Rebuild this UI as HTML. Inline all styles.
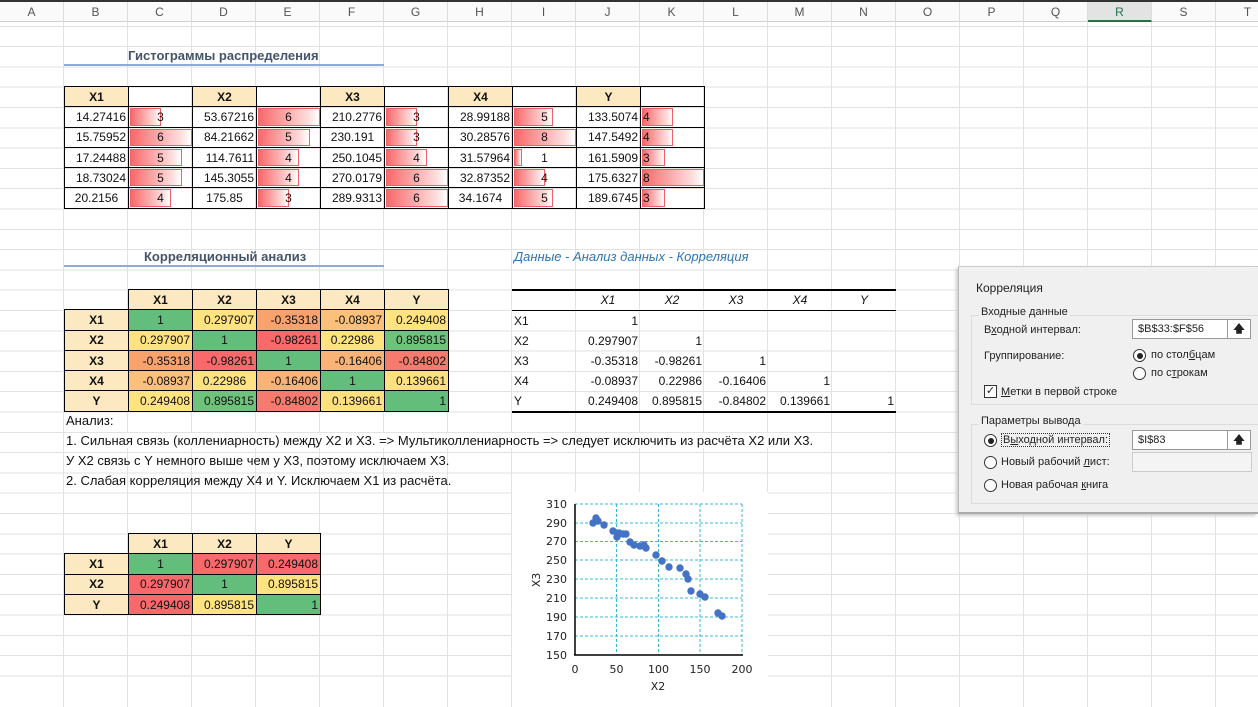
<!DOCTYPE html>
<html><head><meta charset="utf-8"><style>
*{box-sizing:border-box;margin:0;padding:0}
body{width:1258px;height:707px;overflow:hidden;background:#fff;position:relative;font-family:"Liberation Sans Narrow","Liberation Sans","DejaVu Sans Condensed",sans-serif;font-size:13px;color:#111}
.grid{position:absolute;left:0;top:22px;width:1258px;height:685px;
background-image:repeating-linear-gradient(to right,transparent 0 63px,#e2e2e2 63px 64px),repeating-linear-gradient(to bottom,transparent 0 19.3px,#e2e2e2 19.3px 20.3px);background-position:0 -15.5px}
.hdr{position:absolute;left:0;top:0;width:1258px;height:22px;background:#fafafa;border-top:2px solid #333;border-bottom:1px solid #d0d0d0}
.hdr div{position:absolute;top:0;width:64px;height:20px;line-height:20px;text-align:center;color:#555;font-family:"Liberation Sans",sans-serif;font-size:12px;border-right:1px solid #ddd}
.abs{position:absolute}
table{border-collapse:collapse;table-layout:fixed;position:absolute;font-size:12px}
td{height:20.3px;padding:0 2px;white-space:nowrap;overflow:hidden;text-align:right;line-height:18px}
.b td{border:1px solid #000}
.h{background:#fde9c1;font-weight:bold;text-align:center}
.c{text-align:center}
.bar{position:relative}
.bar i{position:absolute;left:1px;top:1px;bottom:1px;background:linear-gradient(to right,#f8696b,#fde2e2 85%,#fff);border:1px solid #f06066}
.bar span{position:relative}
.G{background:#63be7b}.Y{background:#ffe380}.Y2{background:#fee07e}.O{background:#f8a26d}.O2{background:#fbc079}.O3{background:#fab376}.R{background:#f8696b}.R2{background:#f47b6d}.G2{background:#6fc27c}
.title{position:absolute;font-weight:bold;color:#44546a;font-size:13px}
.uline{position:absolute;height:2px;background:#8ea9db}
.dlg{position:absolute;left:958px;top:266px;width:300px;height:248px;background:#f0f0f0;border-left:1px solid #bbb;border-bottom:2px solid #aaa;border-top:1px solid #ccc;box-shadow:-2px 2px 3px #ccc;font-family:"Liberation Sans",sans-serif;font-size:11px;color:#222}
.dlg .a{position:absolute;white-space:nowrap}
.inp{position:absolute;background:#fff;border:1px solid #999;height:20px;line-height:18px;padding-left:5px}
.btn{position:absolute;width:24px;height:20px;border:1px solid #999;background:#fff;text-align:center;line-height:18px;font-weight:bold}
.rad{position:absolute;width:13px;height:13px;border:1px solid #333;border-radius:50%;background:#fff}
.rad.on::after{content:"";position:absolute;left:2.5px;top:2.5px;width:6px;height:6px;border-radius:50%;background:#222}
</style></head><body>
<div class="grid"></div>
<div class="hdr">
<div style="left:0">A</div><div style="left:64px">B</div><div style="left:128px">C</div><div style="left:192px">D</div><div style="left:256px">E</div><div style="left:320px">F</div><div style="left:384px">G</div><div style="left:448px">H</div><div style="left:512px">I</div><div style="left:576px">J</div><div style="left:640px">K</div><div style="left:704px">L</div><div style="left:768px">M</div><div style="left:832px">N</div><div style="left:896px">O</div><div style="left:960px">P</div><div style="left:1024px">Q</div><div style="left:1088px;background:#e3e3e3;border-bottom:2px solid #217346;color:#217346">R</div><div style="left:1152px">S</div><div style="left:1216px">T</div>
</div>

<div class="title" style="left:128px;top:48px">Гистограммы распределения</div>
<div class="uline" style="left:64px;top:64px;width:320px"></div>

<table class="b" style="left:64px;top:86px;width:640px">
<colgroup><col style="width:64px"><col style="width:64px"><col style="width:64px"><col style="width:64px"><col style="width:64px"><col style="width:64px"><col style="width:64px"><col style="width:64px"><col style="width:64px"><col style="width:64px"></colgroup>
<tr><td class="h">X1</td><td></td><td class="h">X2</td><td></td><td class="h">X3</td><td></td><td class="h">X4</td><td></td><td class="h">Y</td><td></td></tr>
<tr><td>14.27416</td><td class="bar c"><i style="width:31px"></i><span>3</span></td><td>53.67216</td><td class="bar c"><i style="width:62px"></i><span>6</span></td><td>210.2776</td><td class="bar c"><i style="width:31px"></i><span>3</span></td><td>28.99188</td><td class="bar c"><i style="width:39px"></i><span>5</span></td><td>133.5074</td><td class="bar" style="text-align:left"><i style="width:31px"></i><span>4</span></td></tr>
<tr><td>15.75952</td><td class="bar c"><i style="width:62px"></i><span>6</span></td><td>84.21662</td><td class="bar c"><i style="width:52px"></i><span>5</span></td><td class="c">230.191</td><td class="bar c"><i style="width:31px"></i><span>3</span></td><td>30.28576</td><td class="bar c"><i style="width:62px"></i><span>8</span></td><td>147.5492</td><td class="bar" style="text-align:left"><i style="width:31px"></i><span>4</span></td></tr>
<tr><td>17.24488</td><td class="bar c"><i style="width:52px"></i><span>5</span></td><td>114.7611</td><td class="bar c"><i style="width:41px"></i><span>4</span></td><td>250.1045</td><td class="bar c"><i style="width:41px"></i><span>4</span></td><td>31.57964</td><td class="bar c"><i style="width:8px"></i><span>1</span></td><td>161.5909</td><td class="bar" style="text-align:left"><i style="width:23px"></i><span>3</span></td></tr>
<tr><td>18.73024</td><td class="bar c"><i style="width:52px"></i><span>5</span></td><td>145.3055</td><td class="bar c"><i style="width:41px"></i><span>4</span></td><td>270.0179</td><td class="bar c"><i style="width:62px"></i><span>6</span></td><td>32.87352</td><td class="bar c"><i style="width:31px"></i><span>4</span></td><td>175.6327</td><td class="bar" style="text-align:left"><i style="width:62px"></i><span>8</span></td></tr>
<tr><td class="c">20.2156</td><td class="bar c"><i style="width:41px"></i><span>4</span></td><td class="c">175.85</td><td class="bar c"><i style="width:31px"></i><span>3</span></td><td>289.9313</td><td class="bar c"><i style="width:62px"></i><span>6</span></td><td class="c">34.1674</td><td class="bar c"><i style="width:39px"></i><span>5</span></td><td>189.6745</td><td class="bar" style="text-align:left"><i style="width:23px"></i><span>3</span></td></tr>
</table>

<div class="title" style="left:144px;top:249px">Корреляционный анализ</div>
<div class="uline" style="left:64px;top:265px;width:320px"></div>
<div class="abs" style="left:514px;top:249px;color:#2e75b6;font-style:italic">Данные - Анализ данных - Корреляция</div>

<table class="b" style="left:64px;top:289px;width:384px">
<colgroup><col style="width:64px"><col style="width:64px"><col style="width:64px"><col style="width:64px"><col style="width:64px"><col style="width:64px"></colgroup>
<tr><td style="border:none;border-bottom:1px solid #000"></td><td class="h">X1</td><td class="h">X2</td><td class="h">X3</td><td class="h">X4</td><td class="h">Y</td></tr>
<tr><td class="h">X1</td><td class="G c">1</td><td class="Y">0.297907</td><td class="O">-0.35318</td><td class="O2">-0.08937</td><td class="Y">0.249408</td></tr>
<tr><td class="h">X2</td><td class="Y">0.297907</td><td class="G c">1</td><td class="R">-0.98261</td><td class="Y c">0.22986</td><td class="G2">0.895815</td></tr>
<tr><td class="h">X3</td><td class="O">-0.35318</td><td class="R">-0.98261</td><td class="G c">1</td><td class="O3">-0.16406</td><td class="R2">-0.84802</td></tr>
<tr><td class="h">X4</td><td class="O2">-0.08937</td><td class="Y c">0.22986</td><td class="O3">-0.16406</td><td class="G c">1</td><td class="Y2">0.139661</td></tr>
<tr><td class="h">Y</td><td class="Y">0.249408</td><td class="G2">0.895815</td><td class="R2">-0.84802</td><td class="Y2">0.139661</td><td class="G">1</td></tr>
</table>

<table style="left:512px;top:289px;width:384px;border-top:2px solid #000;border-bottom:2px solid #000">
<colgroup><col style="width:64px"><col style="width:64px"><col style="width:64px"><col style="width:64px"><col style="width:64px"><col style="width:64px"></colgroup>
<tr style="font-style:italic;border-bottom:1px solid #000"><td></td><td class="c">X1</td><td class="c">X2</td><td class="c">X3</td><td class="c">X4</td><td class="c">Y</td></tr>
<tr><td style="text-align:left">X1</td><td>1</td><td></td><td></td><td></td><td></td></tr>
<tr><td style="text-align:left">X2</td><td>0.297907</td><td>1</td><td></td><td></td><td></td></tr>
<tr><td style="text-align:left">X3</td><td>-0.35318</td><td>-0.98261</td><td>1</td><td></td><td></td></tr>
<tr><td style="text-align:left">X4</td><td>-0.08937</td><td>0.22986</td><td>-0.16406</td><td>1</td><td></td></tr>
<tr><td style="text-align:left">Y</td><td>0.249408</td><td>0.895815</td><td>-0.84802</td><td>0.139661</td><td>1</td></tr>
</table>

<div class="abs" style="left:66px;top:413px">Анализ:</div>
<div class="abs" style="left:66px;top:433px;background:#fff;padding-right:4px">1. Сильная связь (коллениарность) между X2 и X3. =&gt; Мультиколлениарность =&gt; следует исключить из расчёта X2 или X3.</div>
<div class="abs" style="left:66px;top:453px">У X2 связь с Y немного выше чем у X3, поэтому исключаем X3.</div>
<div class="abs" style="left:66px;top:473px">2. Слабая корреляция между X4 и Y. Исключаем X1 из расчёта.</div>

<table class="b" style="left:64px;top:533px;width:256px">
<colgroup><col style="width:64px"><col style="width:64px"><col style="width:64px"><col style="width:64px"></colgroup>
<tr><td style="border:none;border-bottom:1px solid #000"></td><td class="h">X1</td><td class="h">X2</td><td class="h">Y</td></tr>
<tr><td class="h">X1</td><td class="G c">1</td><td class="R">0.297907</td><td class="R">0.249408</td></tr>
<tr><td class="h">X2</td><td class="R">0.297907</td><td class="G c">1</td><td class="Y">0.895815</td></tr>
<tr><td class="h">Y</td><td class="R">0.249408</td><td class="Y">0.895815</td><td class="G">1</td></tr>
</table>

<svg class="abs" style="left:512px;top:492px" width="256" height="215" font-family="DejaVu Sans,sans-serif" font-size="11">
<rect width="256" height="215" fill="#fff"/>
<g stroke="#3bbad6" stroke-dasharray="3,2" stroke-width="1">
<line x1="63" y1="12" x2="230" y2="12"/><line x1="63" y1="31" x2="230" y2="31"/><line x1="63" y1="49.5" x2="230" y2="49.5"/><line x1="63" y1="68" x2="230" y2="68"/><line x1="63" y1="87" x2="230" y2="87"/><line x1="63" y1="106" x2="230" y2="106"/><line x1="63" y1="125" x2="230" y2="125"/><line x1="63" y1="144" x2="230" y2="144"/>
<line x1="104.5" y1="12" x2="104.5" y2="163"/><line x1="146.5" y1="12" x2="146.5" y2="163"/><line x1="188" y1="12" x2="188" y2="163"/><line x1="230" y1="12" x2="230" y2="163"/>
</g>
<g stroke="#000" stroke-width="1.5"><line x1="63" y1="12" x2="63" y2="163"/><line x1="62" y1="163" x2="231" y2="163"/></g>
<g fill="#222" text-anchor="end">
<text x="55" y="16">310</text><text x="55" y="35">290</text><text x="55" y="53">270</text><text x="55" y="72">250</text><text x="55" y="91">230</text><text x="55" y="110">210</text><text x="55" y="129">190</text><text x="55" y="148">170</text><text x="55" y="167">150</text></g>
<g fill="#222" text-anchor="middle">
<text x="63" y="181">0</text><text x="104.5" y="181">50</text><text x="146.5" y="181">100</text><text x="188" y="181">150</text><text x="230" y="181">200</text>
<text x="146" y="198">X2</text><text transform="translate(28,88) rotate(-90)">X3</text></g>
<g fill="#4472c4">
<circle cx="81" cy="31" r="3.7"/><circle cx="84" cy="26" r="3.7"/><circle cx="86" cy="29" r="3.7"/><circle cx="92" cy="33" r="3.7"/><circle cx="101" cy="39" r="3.7"/><circle cx="105" cy="45" r="3.7"/><circle cx="107" cy="41" r="3.7"/><circle cx="111" cy="42" r="3.7"/><circle cx="114" cy="42" r="3.7"/><circle cx="118" cy="50" r="3.7"/><circle cx="122" cy="53" r="3.7"/><circle cx="128" cy="54" r="3.7"/><circle cx="132" cy="53" r="3.7"/><circle cx="134" cy="56" r="3.7"/><circle cx="144" cy="63" r="3.7"/><circle cx="150" cy="69" r="3.7"/><circle cx="157" cy="75" r="3.7"/><circle cx="168" cy="76" r="3.7"/><circle cx="174" cy="82" r="3.7"/><circle cx="176" cy="87" r="3.7"/><circle cx="179" cy="99" r="3.7"/><circle cx="188" cy="102" r="3.7"/><circle cx="193" cy="105" r="3.7"/><circle cx="206" cy="121" r="3.7"/><circle cx="210" cy="124" r="3.7"/></g>
</svg>

<div class="dlg">
<div class="a" style="left:17px;top:14px;font-size:12px">Корреляция</div>
<div class="a" style="left:12px;top:48px;width:290px;height:90px;border:1px solid #dcdcdc;border-right:none"></div>
<div class="a" style="left:20px;top:39px;background:#f0f0f0;padding:0 2px">Входные данные</div>
<div class="a" style="left:25px;top:57px">В<u>х</u>одной интервал:</div>
<div class="inp" style="left:173px;top:52px;width:96px">$B$33:$F$56</div><div class="btn" style="left:268px;top:52px">🡅</div>
<div class="a" style="left:25px;top:83px">Группирование:</div>
<div class="rad on" style="left:174px;top:82px"></div><div class="a" style="left:192px;top:82px">по стол<u>б</u>цам</div>
<div class="rad" style="left:174px;top:100px"></div><div class="a" style="left:192px;top:100px">по с<u>т</u>рокам</div>
<div class="a" style="left:25px;top:118px;width:13px;height:13px;border:1px solid #333;background:#fff;font-size:11px;line-height:11px;text-align:center">✓</div>
<div class="a" style="left:42px;top:119px"><u>М</u>етки в первой строке</div>
<div class="a" style="left:12px;top:157px;width:290px;height:80px;border:1px solid #dcdcdc;border-right:none"></div>
<div class="a" style="left:20px;top:148px;background:#f0f0f0;padding:0 2px">Параметры вывода</div>
<div class="rad on" style="left:25px;top:167px"></div><div class="a" style="left:42px;top:166px;border:1px dotted #333;padding:0 1px">В<u>ы</u>ходной интервал:</div>
<div class="inp" style="left:173px;top:163px;width:96px">$I$83</div><div class="btn" style="left:268px;top:163px">🡅</div>
<div class="rad" style="left:25px;top:189px"></div><div class="a" style="left:42px;top:189px">Новый рабочий <u>л</u>ист:</div>
<div class="inp" style="left:173px;top:185px;width:120px;background:#f4f4f4;border-color:#ccc"></div>
<div class="rad" style="left:25px;top:212px"></div><div class="a" style="left:42px;top:212px">Новая рабочая <u>к</u>нига</div>
</div>
</body></html>
